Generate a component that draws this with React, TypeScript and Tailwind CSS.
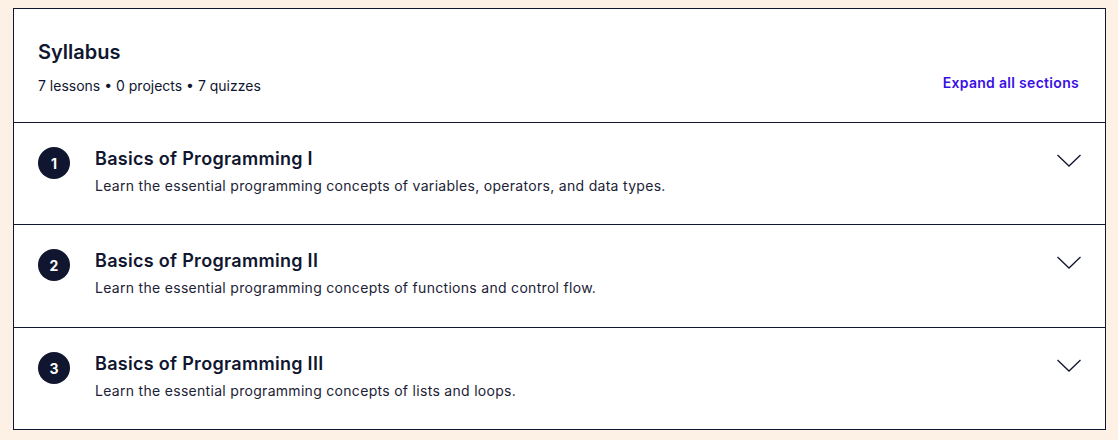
import React from "react";

const lessons = [
  { n: 1, title: "Basics of Programming I", desc: "Learn the essential programming concepts of variables, operators, and data types.", pb: "pb-[28px] border-b border-[#10162f]" },
  { n: 2, title: "Basics of Programming II", desc: "Learn the essential programming concepts of functions and control flow.", pb: "pb-[29px] border-b border-[#10162f]" },
  { n: 3, title: "Basics of Programming III", desc: "Learn the essential programming concepts of lists and loops.", pb: "pb-[28px]" },
];

function Chevron() {
  return (
    <svg width="24" height="13" viewBox="0 0 24 13" fill="none" className="shrink-0">
      <path d="M0.5 1 L12 12 L23.5 1" stroke="#10162f" strokeWidth="1.3" />
    </svg>
  );
}

export default function App() {
  return (
    <div
      className="w-[1118px] h-[440px] bg-[#fdf1e6] pt-[8px] pl-[13px] text-[#10162f]"
      style={{ fontFamily: "Inter, 'Noto Sans', sans-serif" }}
    >
      <div className="w-[1093px] border border-[#10162f] bg-white">
        <div className="pl-6 pr-[26px] pt-[29px] pb-[26px] flex items-end justify-between border-b border-[#10162f]">
          <div>
            <h2 className="text-[20px] leading-[28px] font-semibold">Syllabus</h2>
            <p className="mt-[10px] text-[14px] leading-[20px]">7 lessons • 0 projects • 7 quizzes</p>
          </div>
          <button className="text-[14px] leading-[20px] font-semibold tracking-[0.3px] text-[#3a10e5] mb-[3px]">Expand all sections</button>
        </div>
        {lessons.map((l) => (
          <div key={l.n} className={`flex items-start px-6 pt-[24px] ${l.pb}`}>
            <div className="w-[32px] h-[32px] rounded-full bg-[#10162f] text-white text-[14px] font-bold flex items-center justify-center shrink-0">
              {l.n}
            </div>
            <div className="ml-[25px] flex-1">
              <h3 className="text-[18px] leading-[24px] font-semibold tracking-[0.3px]">{l.title}</h3>
              <p className="mt-[5px] text-[14px] leading-[20px] tracking-[0.3px] text-[#1c2236]">{l.desc}</p>
            </div>
            <div className="mt-[7px]">
              <Chevron />
            </div>
          </div>
        ))}
      </div>
    </div>
  );
}
